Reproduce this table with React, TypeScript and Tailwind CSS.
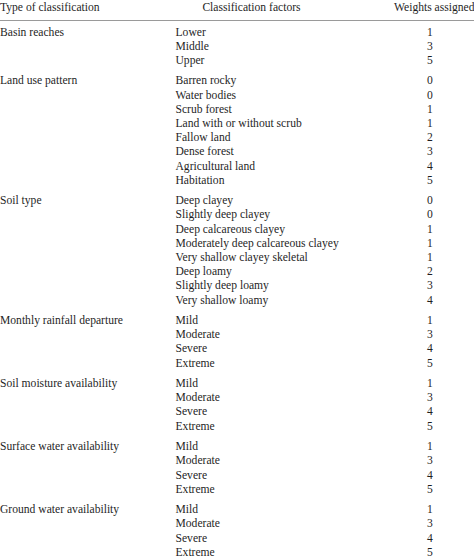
const groups: { type: string; rows: [string, number][] }[] = [
  { type: "Basin reaches", rows: [["Lower", 1], ["Middle", 3], ["Upper", 5]] },
  {
    type: "Land use pattern",
    rows: [
      ["Barren rocky", 0],
      ["Water bodies", 0],
      ["Scrub forest", 1],
      ["Land with or without scrub", 1],
      ["Fallow land", 2],
      ["Dense forest", 3],
      ["Agricultural land", 4],
      ["Habitation", 5],
    ],
  },
  {
    type: "Soil type",
    rows: [
      ["Deep clayey", 0],
      ["Slightly deep clayey", 0],
      ["Deep calcareous clayey", 1],
      ["Moderately deep calcareous clayey", 1],
      ["Very shallow clayey skeletal", 1],
      ["Deep loamy", 2],
      ["Slightly deep loamy", 3],
      ["Very shallow loamy", 4],
    ],
  },
  { type: "Monthly rainfall departure", rows: [["Mild", 1], ["Moderate", 3], ["Severe", 4], ["Extreme", 5]] },
  { type: "Soil moisture availability", rows: [["Mild", 1], ["Moderate", 3], ["Severe", 4], ["Extreme", 5]] },
  { type: "Surface water availability", rows: [["Mild", 1], ["Moderate", 3], ["Severe", 4], ["Extreme", 5]] },
  { type: "Ground water availability", rows: [["Mild", 1], ["Moderate", 3], ["Severe", 4], ["Extreme", 5]] },
];

export default function App() {
  return (
    <main
      className="w-[474px] h-[557px] bg-white text-[#1f1f1f] text-[11.6px] leading-[14.18px] overflow-hidden whitespace-nowrap"
      style={{ fontFamily: '"Liberation Serif", "Times New Roman", serif' }}
    >
      {/* Header */}
      <div className="flex h-[21px] border-b border-[#9a9a9a] pt-px">
        <div className="w-[175.5px]">Type of classification</div>
        <div className="w-[152px] text-center">Classification factors</div>
        <div className="flex-1" />
        <div className="w-[80px] text-center">Weights assigned</div>
      </div>

      {/* Groups */}
      <div className="flex flex-col gap-[6.3px] pt-[4.6px]">
        {groups.map((g) => (
          <div key={g.type} className="flex">
            <div className="w-[175.5px]">{g.type}</div>
            <div className="flex-1">
              {g.rows.map(([factor, w], i) => (
                <div key={i} className="flex">
                  <div className="flex-1">{factor}</div>
                  <div className="w-[80px] pr-2 text-center">{w}</div>
                </div>
              ))}
            </div>
          </div>
        ))}
      </div>
    </main>
  );
}
